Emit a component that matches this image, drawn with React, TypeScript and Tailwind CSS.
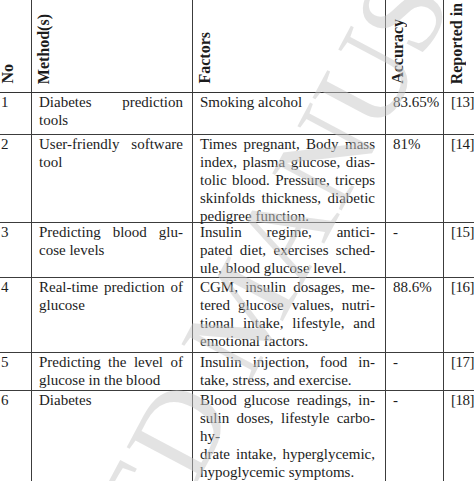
import React from "react";

const COLS = "grid grid-cols-[38px_161px_193px_58px_70px]";

function J({ lines }: { lines: string[] }) {
  return (
    <>
      {lines.map((l, i) => {
        const last = i === lines.length - 1 || l.endsWith("hy-");
        return (
          <div
            key={i}
            className={
              last
                ? "text-left whitespace-nowrap"
                : "text-justify [text-align-last:justify] whitespace-nowrap"
            }
          >
            {l}
          </div>
        );
      })}
    </>
  );
}

type Row = {
  no: string;
  h: string;
  method: string[];
  factors: string[];
  acc: string;
  ref: string;
};

const rows: Row[] = [
  {
    no: "1",
    h: "h-[42px]",
    method: ["Diabetes prediction", "tools"],
    factors: ["Smoking alcohol"],
    acc: "83.65%",
    ref: "[13]",
  },
  {
    no: "2",
    h: "h-[88px]",
    method: ["User-friendly software", "tool"],
    factors: [
      "Times pregnant, Body mass",
      "index, plasma glucose, dias-",
      "tolic blood. Pressure, triceps",
      "skinfolds thickness, diabetic",
      "pedigree function.",
    ],
    acc: "81%",
    ref: "[14]",
  },
  {
    no: "3",
    h: "h-[55px]",
    method: ["Predicting blood glu-", "cose levels"],
    factors: [
      "Insulin regime, antici-",
      "pated diet, exercises sched-",
      "ule, blood glucose level.",
    ],
    acc: "-",
    ref: "[15]",
  },
  {
    no: "4",
    h: "h-[75px]",
    method: ["Real-time prediction of", "glucose"],
    factors: [
      "CGM, insulin dosages, me-",
      "tered glucose values, nutri-",
      "tional intake, lifestyle, and",
      "emotional factors.",
    ],
    acc: "88.6%",
    ref: "[16]",
  },
  {
    no: "5",
    h: "h-[38px]",
    method: ["Predicting the level of", "glucose in the blood"],
    factors: ["Insulin injection, food in-", "take, stress, and exercise."],
    acc: "-",
    ref: "[17]",
  },
  {
    no: "6",
    h: "h-[110px]",
    method: ["Diabetes"],
    factors: [
      "Blood glucose readings, in-",
      "sulin doses, lifestyle carbo-",
      "hy-",
      "drate intake, hyperglycemic,",
      "hypoglycemic symptoms.",
    ],
    acc: "-",
    ref: "[18]",
  },
];

function HeadCell({ label, pl }: { label: string; pl: string }) {
  return (
    <div className={`border-r border-[#3c3c3c] flex items-end pb-[8px] ${pl}`}>
      <span className="[writing-mode:vertical-rl] rotate-180 font-bold whitespace-nowrap text-[16px] leading-[18px]">
        {label}
      </span>
    </div>
  );
}

export default function App() {
  return (
    <div className="relative w-[474px] h-[481px] overflow-hidden bg-white text-[#1c1c1c] font-['Liberation_Serif','Times_New_Roman',serif] text-[15px] leading-[18px]">
      <div className="-ml-[6px] -mt-[11px] w-[520px]">
        <div className={`${COLS} h-[104px] border-b border-[#333]`}>
          <HeadCell label="No" pl="pl-[5px]" />
          <HeadCell label="Method(s)" pl="pl-[3px]" />
          <HeadCell label="Factors" pl="pl-[3px]" />
          <HeadCell label="Accuracy" pl="pl-[3px]" />
          <HeadCell label="Reported in" pl="pl-[4px]" />
        </div>
        {rows.map((r) => (
          <div
            key={r.no}
            className={`${COLS} ${r.h} border-b border-[#3c3c3c]`}
          >
            <div className="border-r border-[#3c3c3c] pl-[7px]">{r.no}</div>
            <div className="border-r border-[#3c3c3c] pl-[7px] pr-[9px]">
              <J lines={r.method} />
            </div>
            <div className="border-r border-[#3c3c3c] pl-[7px] pr-[10px]">
              <J lines={r.factors} />
            </div>
            <div className="border-r border-[#3c3c3c] pl-[7px]">{r.acc}</div>
            <div className="pl-[7px] tracking-[-0.5px]">{r.ref}</div>
          </div>
        ))}
      </div>
      <div className="pointer-events-none absolute left-[243px] top-[311px] -translate-x-1/2 -translate-y-1/2 -rotate-[62deg] whitespace-nowrap text-[120px] leading-none text-[#c8c8c880] font-['Liberation_Serif',serif]">
        ACCEPTED MANUSCRIPT
      </div>
    </div>
  );
}
